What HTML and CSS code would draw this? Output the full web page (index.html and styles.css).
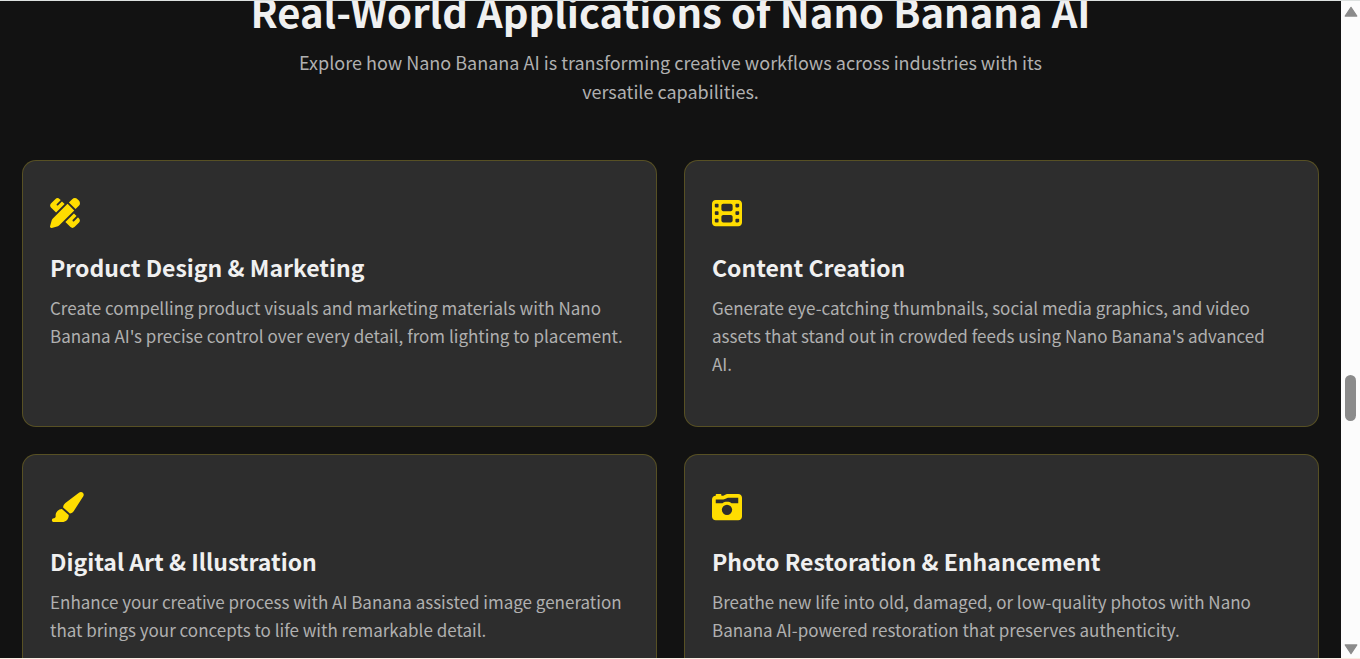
FILE: index.html
```
<!DOCTYPE html>
<html lang="en">
<head>
  <meta charset="UTF-8" />
  <meta name="viewport" content="width=device-width, initial-scale=1" />
  <title>Nano Banana AI</title>
  <link rel="stylesheet" href="styles.css">
</head>
<body>

  <div class="viewport">
    <main class="page">
      <section class="use-cases">
        <div class="section-header">
          <h2>Real-World Applications of Nano Banana AI</h2>
          <p>Explore how Nano Banana AI is transforming creative workflows across industries with its versatile capabilities.</p>
        </div>

        <div class="cards">
          <div class="card">
            <div class="card-icon">
              <svg viewBox="0 0 512 512" aria-hidden="true"><path d="M469.3 19.3l23.4 23.4c25 25 25 65.5 0 90.5l-56.4 56.4L322.3 75.7l56.4-56.4c25-25 65.5-25 90.5 0zM44.9 353.2L299.7 98.3 413.7 212.3 158.8 467.1c-6.7 6.7-15.1 11.6-24.2 14.2l-104 29.7c-8.4 2.4-17.4 .1-23.6-6.1s-8.5-15.2-6.1-23.6l29.7-104c2.6-9.2 7.5-17.5 14.2-24.2zM249.4 103.4L103.4 249.4 16 161.9c-18.7-18.7-18.7-49.1 0-67.9L94.1 16c18.7-18.7 49.1-18.7 67.9 0l19.8 19.8c-.3 .3-.7 .6-1 .9l-64 64c-6.2 6.2-6.2 16.4 0 22.6s16.4 6.2 22.6 0l64-64c.3-.3 .6-.7 .9-1l45.1 45.1zM408.6 262.6l45.1 45.1c-.3 .3-.7 .6-1 .9l-64 64c-6.2 6.2-6.2 16.4 0 22.6s16.4 6.2 22.6 0l64-64c.3-.3 .6-.7 .9-1L496 350.1c18.7 18.7 18.7 49.1 0 67.9L417.9 496c-18.7 18.7-49.1 18.7-67.9 0l-87.4-87.4L408.6 262.6z"/></svg>
            </div>
            <h3>Product Design &amp; Marketing</h3>
            <p>Create compelling product visuals and marketing materials with Nano Banana AI's precise control over every detail, from lighting to placement.</p>
          </div>

          <div class="card">
            <div class="card-icon">
              <svg viewBox="0 0 512 512" aria-hidden="true"><path d="M0 96C0 60.7 28.7 32 64 32H448c35.3 0 64 28.7 64 64V416c0 35.3-28.7 64-64 64H64c-35.3 0-64-28.7-64-64V96zM48 368v32c0 8.8 7.2 16 16 16H96c8.8 0 16-7.2 16-16V368c0-8.8-7.2-16-16-16H64c-8.8 0-16 7.2-16 16zm368-16c-8.8 0-16 7.2-16 16v32c0 8.8 7.2 16 16 16h32c8.8 0 16-7.2 16-16V368c0-8.8-7.2-16-16-16H416zM48 240v32c0 8.8 7.2 16 16 16H96c8.8 0 16-7.2 16-16V240c0-8.8-7.2-16-16-16H64c-8.8 0-16 7.2-16 16zm368-16c-8.8 0-16 7.2-16 16v32c0 8.8 7.2 16 16 16h32c8.8 0 16-7.2 16-16V240c0-8.8-7.2-16-16-16H416zM48 112v32c0 8.8 7.2 16 16 16H96c8.8 0 16-7.2 16-16V112c0-8.8-7.2-16-16-16H64c-8.8 0-16 7.2-16 16zm368-16c-8.8 0-16 7.2-16 16v32c0 8.8 7.2 16 16 16h32c8.8 0 16-7.2 16-16V112c0-8.8-7.2-16-16-16H416zM160 128v64c0 17.7 14.3 32 32 32H320c17.7 0 32-14.3 32-32V128c0-17.7-14.3-32-32-32H192c-17.7 0-32 14.3-32 32zm32 160c-17.7 0-32 14.3-32 32v64c0 17.7 14.3 32 32 32H320c17.7 0 32-14.3 32-32V320c0-17.7-14.3-32-32-32H192z"/></svg>
            </div>
            <h3>Content Creation</h3>
            <p>Generate eye-catching thumbnails, social media graphics, and video assets that stand out in crowded feeds using Nano Banana's advanced AI.</p>
          </div>

          <div class="card">
            <div class="card-icon">
              <svg viewBox="0 0 576 512" aria-hidden="true"><path d="M339.3 367.1c27.3-3.9 51.9-19.4 67.2-42.9L568.2 74.1c12.6-19.5 9.4-45.3-7.6-61.2S517.7-4.4 499.1 9.6L262.4 187.2c-24 18-38.2 46.1-38.4 76.1L339.3 367.1zm-19.6 25.4l-116-104.4C143.9 290.3 96 339.6 96 400c0 3.9 .2 7.8 .6 11.6C98.4 429.1 86.4 448 68.8 448H64c-17.7 0-32 14.3-32 32s14.3 32 32 32H208c61.9 0 112-50.1 112-112c0-2.5-.1-5-.2-7.5z"/></svg>
            </div>
            <h3>Digital Art &amp; Illustration</h3>
            <p>Enhance your creative process with AI Banana assisted image generation that brings your concepts to life with remarkable detail.</p>
          </div>

          <div class="card">
            <div class="card-icon">
              <svg viewBox="0 0 512 512" aria-hidden="true"><path d="M220.6 121.2L271.1 96 448 96v96H333.2c-21.9-15.1-48.5-24-77.2-24s-55.2 8.9-77.2 24H64V128H192c9.9 0 19.7-2.3 28.6-6.8zM0 128V416c0 35.3 28.7 64 64 64H448c35.3 0 64-28.7 64-64V96c0-35.3-28.7-64-64-64H271.1c-9.9 0-19.7 2.3-28.6 6.8L192 64H160V48c0-8.8-7.2-16-16-16H80c-8.8 0-16 7.2-16 16V64C28.7 64 0 92.7 0 128zM168 304a88 88 0 1 1 176 0 88 88 0 1 1 -176 0z"/></svg>
            </div>
            <h3>Photo Restoration &amp; Enhancement</h3>
            <p>Breathe new life into old, damaged, or low-quality photos with Nano Banana AI-powered restoration that preserves authenticity.</p>
          </div>
        </div>
      </section>
    </main>

    <div class="scrollbar" aria-hidden="true">
      <svg class="arrow" viewBox="0 0 12 10"><path d="M6 1L11 8.500H1z"/></svg>
      <div class="track">
        <div class="before"></div>
        <div class="thumb"></div>
        <div class="after"></div>
      </div>
      <svg class="arrow" viewBox="0 0 12 10"><path d="M6 9L1 1.500H11z"/></svg>
    </div>
  </div>

</body>
</html>
```
FILE: styles.css
```
* {
  box-sizing: border-box;
  margin: 0;
  padding: 0;
}

body {
  background-color: #121212;
  color: #f0f0f0;
  font-family: "Noto Sans CJK SC", "Noto Sans", sans-serif;
}

.viewport {
  display: flex;
  height: 100vh;
  overflow: hidden;
  border-top: 1px solid #dde1e0;
  border-bottom: 1px solid #fbeee4;
}

.page {
  flex: 1;
  min-width: 0;
  overflow: hidden;
}

/* section is scrolled slightly past its heading */
.use-cases {
  margin-top: -20px;
  padding: 0 22px;
}

.section-header {
  text-align: center;
  margin-bottom: 54px;
}

.section-header h2 {
  font-size: 40px;
  line-height: 60px;
  margin-bottom: 7px;
}

.section-header p {
  max-width: 800px;
  margin: 0 auto;
  color: #b0b0b0;
  font-size: 18px;
  line-height: 29px;
}

.cards {
  display: grid;
  grid-template-columns: repeat(2, 1fr);
  grid-auto-rows: 1fr;
  gap: 27px;
}

.card {
  background-color: #2d2d2d;
  border: 1px solid rgba(255, 221, 0, 0.2);
  border-radius: 14px;
  padding: 27px 32px 48px 27px;
}

.card-icon {
  display: flex;
  align-items: center;
  height: 50px;
  margin-bottom: 10px;
}

.card-icon svg {
  height: 30px;
  fill: #ffdd00;
  fill-rule: evenodd;
}

.card h3 {
  font-size: 23px;
  line-height: 38px;
  margin-bottom: 8px;
}

.card p {
  color: #b0b0b0;
  font-size: 17px;
  line-height: 28px;
}

.scrollbar {
  display: flex;
  flex-direction: column;
  align-items: center;
  justify-content: space-between;
  width: 19px;
  padding: 5px 0 3px;
  background-color: #fcfcfc;
}

.arrow {
  width: 14px;
  height: 12px;
  fill: #8b8b8b;
  stroke: #8b8b8b;
  stroke-linejoin: round;
}

.track {
  display: flex;
  flex-direction: column;
  flex: 1;
}

.before {
  flex: 61;
}

.thumb {
  width: 11px;
  height: 46px;
  border-radius: 6px;
  background-color: #8b8b8b;
}

.after {
  flex: 38;
}
```
